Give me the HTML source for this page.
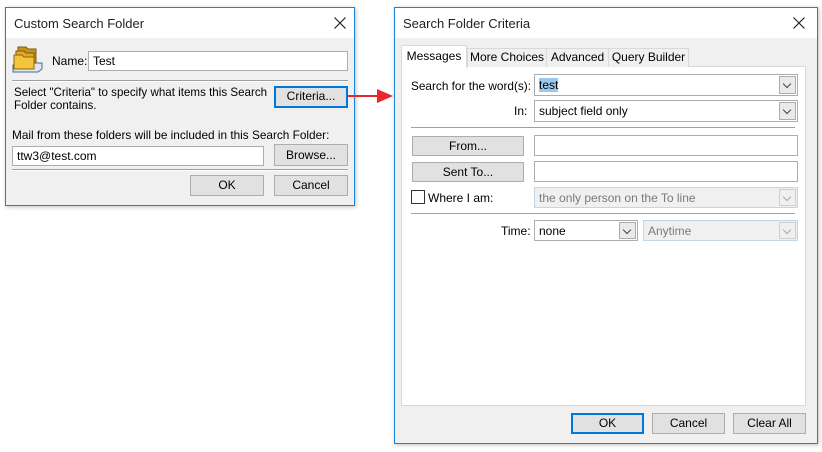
<!DOCTYPE html>
<html><head><meta charset="utf-8"><style>
*{box-sizing:border-box;margin:0;padding:0}
body{width:822px;height:452px;background:#fff;position:relative;font-family:"Liberation Sans",sans-serif;font-size:12px;color:#000;overflow:hidden}
.a{position:absolute}
.dlg{position:absolute;border:1px solid #1883d7;background:#f0f0f0;box-shadow:1px 1px 4px rgba(0,0,0,.25)}
.title{position:absolute;left:0;top:0;right:0;height:30px;background:#fff;font-size:13px;padding:8px 0 0 8px;color:#222}
.inp{position:absolute;background:#fff;border:1px solid #abadb3;padding:3px 4px;white-space:nowrap}
.btn{position:absolute;background:#e1e1e1;border:1px solid #adadad;text-align:center;line-height:18px}
.btn.def{border:2px solid #0078d7;line-height:16px}
.sep{position:absolute;height:2px;border-top:1px solid #a0a0a0;border-bottom:1px solid #fff}
.dd{position:absolute;right:1px;top:1px;bottom:1px;width:17px;border:1px solid #adadad;background:#eaeaea}
.dd:after{content:"";position:absolute;left:4px;top:4px;width:5px;height:5px;border-right:1px solid #444;border-bottom:1px solid #444;transform:rotate(45deg)}
.dis{background:#f0f0f0;border-color:#c3d5ea;color:#7a7a7a}
.dis .dd{border-color:#cfcfcf;background:#f0f0f0}
.dis .dd:after{border-color:#aaa}
.tab{position:absolute;top:48px;height:19px;background:#f0f0f0;border:1px solid #d9d9d9;border-bottom:none;text-align:center;line-height:17px}
</style></head><body>
<!-- left dialog -->
<div class="dlg" style="left:5px;top:7px;width:350px;height:199px">
<div class="title">Custom Search Folder</div>
<svg class="a" style="left:328px;top:9px" width="12" height="12"><path d="M0.5 0.5L11.5 11.5M11.5 0.5L0.5 11.5" stroke="#222" stroke-width="1.2"/></svg>
</div>
<svg class="a" style="left:12px;top:45px" width="32" height="30" viewBox="0 0 32 30">
<path d="M1 20L6 18H30V24L26 27H1z" fill="#dfe6f0" stroke="#4a6b94"/>
<path d="M6 2h8l2 2h8v14H6z" fill="#c9901a" stroke="#7a5a10"/>
<path d="M4 6h8l2 2h8v12H4z" fill="#e0ab22" stroke="#7a5a10"/>
<path d="M2 10h8l2 2h10v12H2z" fill="#f4c53a" stroke="#8a6512"/>
</svg>
<div class="a" style="left:52px;top:54px">Name:</div>
<div class="inp" style="left:88px;top:51px;width:260px;height:20px;padding-top:2px">Test</div>
<div class="sep" style="left:12px;top:80px;width:336px"></div>
<div class="a" style="left:14px;top:86px;line-height:13px;width:262px;font-size:11.6px">Select "Criteria" to specify what items this Search Folder contains.</div>
<div class="btn def" style="left:274px;top:86px;width:74px;height:22px">Criteria...</div>
<div class="a" style="left:12px;top:128px;font-size:11.8px">Mail from these folders will be included in this Search Folder:</div>
<div class="inp" style="left:12px;top:146px;width:252px;height:20px;padding-top:2px">ttw3@test.com</div>
<div class="btn" style="left:274px;top:144px;width:74px;height:22px;line-height:20px">Browse...</div>
<div class="sep" style="left:12px;top:169px;width:336px"></div>
<div class="btn" style="left:190px;top:175px;width:74px;height:21px">OK</div>
<div class="btn" style="left:274px;top:175px;width:74px;height:21px">Cancel</div>
<!-- arrow -->
<svg class="a" style="left:347px;top:88px" width="48" height="16"><path d="M0 8H32" stroke="#e8282b" stroke-width="2"/><path d="M30 1L46 8L30 15z" fill="#e8282b"/></svg>
<!-- right dialog -->
<div class="dlg" style="left:394px;top:7px;width:424px;height:437px">
<div class="title">Search Folder Criteria</div>
<svg class="a" style="left:398px;top:9px" width="12" height="12"><path d="M0.5 0.5L11.5 11.5M11.5 0.5L0.5 11.5" stroke="#222" stroke-width="1.2"/></svg>
</div>
<div class="a" style="left:401px;top:66px;width:405px;height:340px;background:#fff;border:1px solid #d9d9d9"></div>
<div class="tab" style="left:467px;width:80px">More Choices</div>
<div class="tab" style="left:546px;width:63px">Advanced</div>
<div class="tab" style="left:608px;width:81px">Query Builder</div>
<div class="tab" style="left:401px;top:45px;width:66px;height:23px;background:#fff;line-height:20px">Messages</div>
<div class="a" style="left:411px;top:79px;font-size:11.8px">Search for the word(s):</div>
<div class="inp" style="left:534px;top:74px;width:264px;height:22px"><span style="background:#99c9ef">test</span><div class="dd"></div></div>
<div class="a" style="left:514px;top:104px">In:</div>
<div class="inp" style="left:534px;top:100px;width:264px;height:22px">subject field only<div class="dd"></div></div>
<div class="sep" style="left:411px;top:127px;width:384px"></div>
<div class="btn" style="left:412px;top:136px;width:112px;height:20px">From...</div>
<div class="inp" style="left:534px;top:135px;width:264px;height:21px"></div>
<div class="btn" style="left:412px;top:162px;width:112px;height:20px">Sent To...</div>
<div class="inp" style="left:534px;top:161px;width:264px;height:21px"></div>
<div class="a" style="left:411px;top:190px;width:14px;height:14px;border:1px solid #333;background:#fff"></div>
<div class="a" style="left:428px;top:191px">Where I am:</div>
<div class="inp dis" style="left:534px;top:187px;width:264px;height:21px">the only person on the To line<div class="dd"></div></div>
<div class="sep" style="left:411px;top:213px;width:384px"></div>
<div class="a" style="left:501px;top:224px">Time:</div>
<div class="inp" style="left:534px;top:220px;width:104px;height:21px">none<div class="dd"></div></div>
<div class="inp dis" style="left:643px;top:220px;width:155px;height:21px">Anytime<div class="dd"></div></div>
<div class="btn def" style="left:571px;top:413px;width:73px;height:21px">OK</div>
<div class="btn" style="left:652px;top:413px;width:73px;height:21px">Cancel</div>
<div class="btn" style="left:733px;top:413px;width:73px;height:21px">Clear All</div>
</body></html>
